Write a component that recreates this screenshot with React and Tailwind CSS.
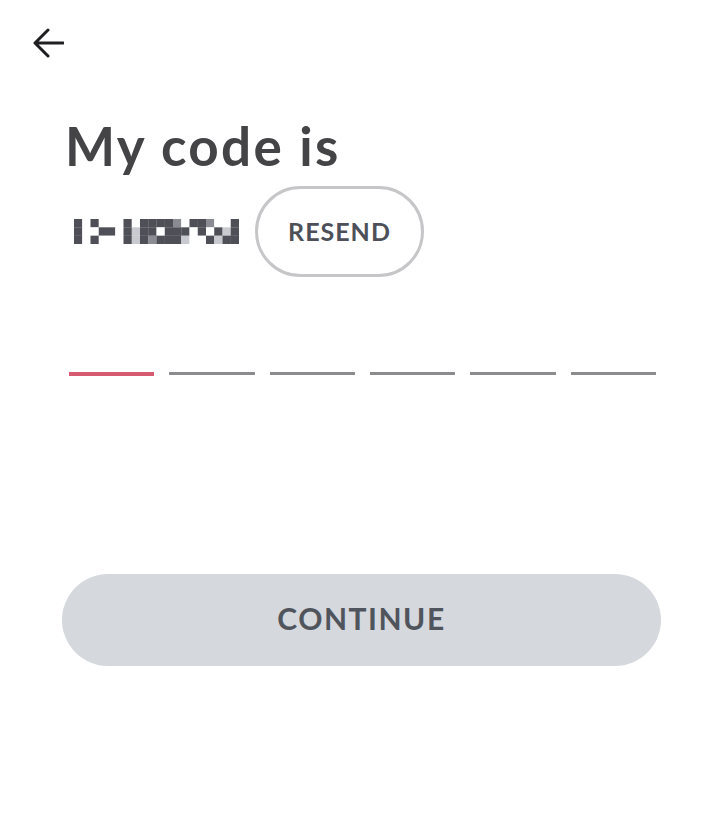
import React, { useState } from "react";

// blurred phone number, drawn as blocks (0 white, 1 light, 2 mid, 3 dark)
const blur = [
  [3, 0, 3, 0, 0, 0, 3, 0, 3, 3, 3, 3, 2, 0, 3, 3, 2, 0, 0, 3],
  [3, 0, 0, 3, 3, 0, 3, 1, 3, 3, 0, 3, 3, 3, 0, 3, 0, 3, 1, 3],
  [3, 0, 3, 0, 0, 0, 3, 1, 3, 2, 3, 3, 3, 1, 0, 0, 3, 1, 3, 3],
];
const shades = ["#ffffff", "#c9cacf", "#8b8c93", "#4e4f57"];

const App = () => {
  const [active] = useState(0);

  return (
    <div
      className="w-[720px] h-[813px] bg-white"
      style={{ fontFamily: "Lato, 'Open Sans', sans-serif" }}
    >
      {/* Back */}
      <div className="pt-[28px] pl-[32px]">
        <svg width="32" height="30" viewBox="0 0 32 30" fill="none">
          <path
            d="M31 15H3M16 2L3 15l13 13"
            stroke="#1f1f22"
            strokeWidth="3"
            strokeLinecap="round"
            strokeLinejoin="round"
          />
        </svg>
      </div>

      <div className="px-[62px] pr-[59px]">
        <h1 className="mt-[61px] pl-[3px] text-[53px] leading-[53px] font-bold text-[#444447] tracking-[2.3px]">
          My code is
        </h1>

        <div className="mt-[14px] flex items-center gap-[16px] pl-[12px]">
          <svg width="165" height="25" viewBox="0 0 20 3" preserveAspectRatio="none">
            {blur.map((row, r) =>
              row.map((v, c) => (
                <rect key={r + "-" + c} x={c} y={r} width="1.02" height="1.02" fill={shades[v]} />
              ))
            )}
          </svg>
          <button className="w-[169px] h-[91px] rounded-full border-[3px] border-[#c6c6c8] text-[25px] font-bold text-[#4d5058] tracking-[1px]">
            RESEND
          </button>
        </div>

        <div className="mt-[95px] flex gap-[15px] pl-[7px] pr-[5px] items-start">
          {[0, 1, 2, 3, 4, 5].map((i) => (
            <div
              key={i}
              className={
                i === active
                  ? "flex-1 h-[4px] bg-[#d65a70]"
                  : "flex-1 h-[3px] bg-[#8c8c8e]"
              }
            />
          ))}
        </div>

        <button className="mt-[198px] w-full h-[92px] rounded-full bg-[#d5d8dc] pb-[4px] text-[30px] font-bold text-[#50545c] tracking-[1.5px]">
          CONTINUE
        </button>
      </div>
    </div>
  );
};

export default App;
